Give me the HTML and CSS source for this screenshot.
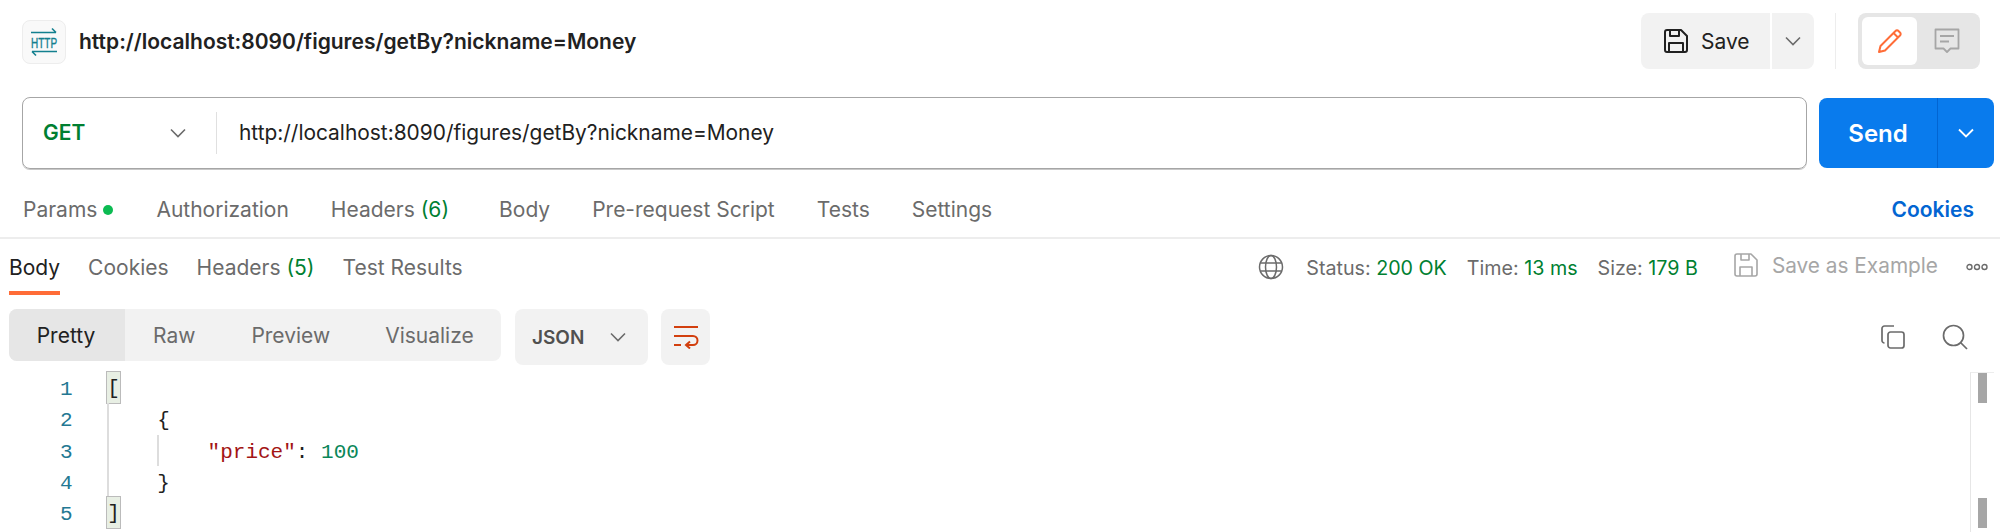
FILE: index.html
```html
<!DOCTYPE html>
<html lang="en">
<head>
<meta charset="utf-8">
<title>Postman request</title>
<link rel="stylesheet" href="styles.css">
</head>
<body>
<header class="title-bar">
  <div class="http-badge">
    <svg width="30" height="30" viewBox="0 0 30 30" fill="none" stroke="#13808f" stroke-width="1.6">
      <path d="M2 5.500H27M23 1.500L27 5.500"/>
      <text x="2" y="13.700" transform="scale(1 1.500)" class="http-text">HTTP</text>
      <path d="M3 24.500H28M7 28.500L3 24.500"/>
    </svg>
  </div>
  <h1 class="request-name">http://localhost:8090/figures/getBy?nickname=Money</h1>
  <div class="title-actions">
    <button class="save-btn">
      <svg width="26" height="26" viewBox="0 0 26 26" fill="none" stroke="#212121" stroke-width="2" stroke-linejoin="round"><path d="M2 4a2 2 0 0 1 2-2h14l6 6v14a2 2 0 0 1-2 2H4a2 2 0 0 1-2-2z"/><path d="M7 2v6h9V2M6 24v-9h14v9"/></svg>
      <span>Save</span>
    </button>
    <button class="save-more">
      <svg class="chev" width="16" height="10" viewBox="0 0 16 10" fill="none" stroke="#6b6b6b" stroke-width="1.6"><path d="M1 1.500l7 7 7-7"/></svg>
    </button>
    <div class="vr"></div>
    <div class="mode-toggle">
      <div class="mode-on">
        <svg width="26" height="26" viewBox="0 0 26 26" fill="none" stroke="#ff6c37" stroke-width="2" stroke-linejoin="round"><path d="M2 24l1.500-6L18.500 3a2 2 0 0 1 3 0l1.500 1.500a2 2 0 0 1 0 3L8 22.500z"/><path d="M16.500 5l4.500 4.500"/></svg>
      </div>
      <div class="mode-off">
        <svg width="26" height="26" viewBox="0 0 26 26" fill="none" stroke="#a6a6a6" stroke-width="1.800" stroke-linejoin="round"><path d="M1.500 1.500h23v19h-8l-3.500 3.500-3.500-3.500h-8z"/><path d="M6 8h14M6 13.500h9"/></svg>
      </div>
    </div>
  </div>
</header>

<section class="url-row">
  <div class="url-box">
    <div class="method"><span>GET</span>
      <svg width="16" height="10" viewBox="0 0 16 10" fill="none" stroke="#6b6b6b" stroke-width="1.600"><path d="M1 1.500l7 7 7-7"/></svg>
    </div>
    <div class="url-text">http://localhost:8090/figures/getBy?nickname=Money</div>
  </div>
  <div class="send">
    <div class="send-main">Send</div>
    <div class="send-more"><svg width="16" height="10" viewBox="0 0 16 10" fill="none" stroke="#fff" stroke-width="1.800"><path d="M1 1.500l7 7 7-7"/></svg></div>
  </div>
</section>

<nav class="req-tabs">
  <span class="t-params">Params<i class="dot"></i></span>
  <span class="t-auth">Authorization</span>
  <span class="t-headers">Headers <em>(6)</em></span>
  <span class="t-body">Body</span>
  <span class="t-pre">Pre-request Script</span>
  <span class="t-tests">Tests</span>
  <span class="t-settings">Settings</span>
  <span class="t-cookies">Cookies</span>
</nav>

<section class="resp-head">
  <div class="resp-tabs">
    <span class="rt rt-active">Body</span>
    <span class="rt">Cookies</span>
    <span class="rt">Headers <em>(5)</em></span>
    <span class="rt">Test Results</span>
  </div>
  <div class="resp-meta">
    <svg class="globe" width="26" height="26" viewBox="0 0 26 26" fill="none" stroke="#6b6b6b" stroke-width="1.500"><circle cx="13" cy="13" r="11.500"/><ellipse cx="13" cy="13" rx="5.500" ry="11.500"/><path d="M2.500 9h21M2.500 17h21"/></svg>
    <span class="m m-status">Status: <b>200 OK</b></span>
    <span class="m m-time">Time: <b>13 ms</b></span>
    <span class="m m-size">Size: <b>179 B</b></span>
    <svg class="save-ex-ico" width="26" height="26" viewBox="0 0 26 26" fill="none" stroke="#a6a6a6" stroke-width="1.600" stroke-linejoin="round"><path d="M2 4a2 2 0 0 1 2-2h14l6 6v14a2 2 0 0 1-2 2H4a2 2 0 0 1-2-2z"/><path d="M8 2v6h8V2M7 24v-9h12v9"/></svg>
    <span class="save-ex">Save as Example</span>
    <svg class="dots" width="22" height="8" viewBox="0 0 22 8" fill="none" stroke="#6b6b6b" stroke-width="1.400"><circle cx="3.500" cy="4" r="2.500"/><circle cx="11" cy="4" r="2.500"/><circle cx="18.500" cy="4" r="2.500"/></svg>
  </div>
</section>

<section class="toolbar">
  <div class="seg">
    <span class="seg-on">Pretty</span>
    <span class="seg-raw">Raw</span>
    <span class="seg-prev">Preview</span>
    <span class="seg-vis">Visualize</span>
  </div>
  <div class="fmt"><span>JSON</span>
    <svg width="16" height="10" viewBox="0 0 16 10" fill="none" stroke="#6b6b6b" stroke-width="1.600"><path d="M1 1.500l7 7 7-7"/></svg>
  </div>
  <div class="wrap-btn">
    <svg width="26" height="24" viewBox="0 0 26 24" fill="none" stroke="#d23f0e" stroke-width="2"><path d="M1 2h24M1 11h19a4 4 0 0 1 0 9h-6M17 16.500l-4 3.500 4 3.500M1 20h7"/></svg>
  </div>
  <div class="tool-icons">
    <svg width="24" height="24" viewBox="0 0 24 24" fill="none" stroke="#6b6b6b" stroke-width="1.700"><path d="M3.500 18A2.500 2.500 0 0 1 1 15.500V3.500A2.500 2.500 0 0 1 3.500 1H13"/><rect x="7" y="7" width="16" height="16" rx="2.500"/></svg>
    <svg width="26" height="26" viewBox="0 0 26 26" fill="none" stroke="#6b6b6b" stroke-width="1.700"><circle cx="11.500" cy="11.500" r="10"/><path d="M18.500 18.500l6.500 6.500"/></svg>
  </div>
</section>

<section class="editor">
  <div class="code">
    <div class="line"><span class="ln">1</span><span class="br">[</span></div>
    <div class="line"><span class="ln">2</span><span class="guide"></span><span>{</span></div>
    <div class="line"><span class="ln">3</span><span class="guide"></span><span class="guide"></span><span class="key">"price"</span><span>: </span><span class="num">100</span></div>
    <div class="line"><span class="ln">4</span><span class="guide"></span><span>}</span></div>
    <div class="line"><span class="ln">5</span><span class="br">]</span></div>
  </div>
  <div class="scroll-track">
    <div class="thumb"></div>
    <div class="thumb"></div>
  </div>
</section>
</body>
</html>
```
FILE: styles.css
```css
* { box-sizing: border-box; }
html, body { margin: 0; height: 532px; overflow: hidden; background: #fff; }
body { font-family: Inter, "Liberation Sans", sans-serif; font-size: 21px; color: #6b6b6b; }
button { font: inherit; border: 0; padding: 0; color: inherit; }
em { font-style: normal; color: #007f31; }

/* title bar */
.title-bar { display: flex; align-items: center; height: 82px; padding: 0 20px 0 22px; }
.http-badge { width: 44px; height: 44px; margin-top: 1px; background: #f9f9f9; border: 1px solid #ededed; border-radius: 8px; display: flex; align-items: center; justify-content: center; }
.http-text { font-family: "Liberation Sans", sans-serif; font-size: 10px; fill: #13808f; stroke: #13808f; stroke-width: 0.25; }
.request-name { margin: 0 0 0 13px; font-size: 21px; font-weight: 600; color: #212121; }
.title-actions { margin-left: auto; display: flex; align-items: center; height: 56px; }
.save-btn { width: 129px; height: 56px; background: #f2f2f2; border-radius: 8px 0 0 8px; display: flex; align-items: center; gap: 12px; padding-left: 22px; color: #212121; }
.save-more { width: 42px; height: 56px; margin-left: 2px; background: #f2f2f2; border-radius: 0 8px 8px 0; display: flex; align-items: center; justify-content: center; }
.vr { width: 1px; height: 56px; background: #ededed; margin: 0 22px 0 21px; }
.mode-toggle { width: 122px; height: 56px; background: #e6e6e6; border-radius: 8px; padding: 4px; display: flex; align-items: center; }
.mode-on { width: 55px; height: 48px; background: #fff; border-radius: 6px; display: flex; align-items: center; justify-content: center; }
.mode-off { flex: 1; display: flex; align-items: center; justify-content: center; }

/* url row */
.url-row { display: flex; align-items: center; height: 74px; margin-top: 14px; padding: 0 6px 0 22px; }
.url-box { width: 1785px; height: 72px; border: 1px solid #a6a6a6; border-radius: 8px; box-shadow: 0 1px 0 #c8c8c8; display: flex; align-items: center; }
.method { width: 194px; height: 42px; border-right: 1px solid #e0e0e0; display: flex; align-items: center; justify-content: space-between; padding: 0 30px 0 20px; font-weight: 600; color: #007f31; }
.method span { padding-bottom: 2px; }
.url-text { padding: 0 0 2px 22px; color: #212121; font-size: 20.900px; }
.send { margin-left: 12px; width: 175px; height: 70px; background: #097bed; border-radius: 8px; display: flex; color: #fff; }
.send-main { width: 118px; display: flex; align-items: center; justify-content: center; font-size: 24px; font-weight: 600; }
.send-more { flex: 1; border-left: 1px solid #0265d2; display: flex; align-items: center; justify-content: center; }

/* request tabs */
.req-tabs { display: flex; align-items: center; height: 67px; margin-top: 2px; padding: 9px 26px 0 23px; border-bottom: 2px solid #ededed; }
.req-tabs > span { white-space: nowrap; }
.dot { display: inline-block; width: 10px; height: 10px; margin-left: 6px; background: #0cbb52; border-radius: 50%; vertical-align: 2px; }
.t-auth { margin-left: 43px; }
.t-headers { margin-left: 42px; }
.t-body { margin-left: 50px; }
.t-pre { margin-left: 42px; }
.t-tests { margin-left: 42px; }
.t-settings { margin-left: 42px; }
.t-cookies { margin-left: auto; color: #0265d2; font-weight: 600; }

/* response header */
.resp-head { display: flex; align-items: flex-start; height: 57px; padding: 0 12px 0 9px; }
.resp-tabs { display: flex; gap: 28px; }
.rt { height: 56px; padding-top: 15px; line-height: 28px; white-space: nowrap; }
.rt-active { color: #212121; border-bottom: 4px solid #ff6c37; }
.resp-meta { margin-left: auto; display: flex; align-items: center; height: 56px; white-space: nowrap; }
.m { font-size: 19.700px; margin-top: 2px; }
.m b { font-weight: 400; color: #007f31; }
.m-status { margin-left: 22px; }
.m-time { margin-left: 20px; }
.m-size { margin-left: 20px; }
.save-ex-ico { margin-left: 35px; margin-top: -4px; }
.save-ex { margin-left: 13px; color: #a6a6a6; margin-top: -4px; font-size: 20.800px; }
.dots { margin-left: 28px; }

/* toolbar */
.toolbar { display: flex; align-items: flex-start; height: 63px; margin-top: 13px; padding: 0 32px 0 9px; }
.seg { display: flex; width: 492px; height: 52px; background: #f2f2f2; border-radius: 8px; overflow: hidden; align-items: center; }
.seg-on { width: 116px; height: 52px; background: #e6e6e6; color: #212121; display: flex; align-items: center; justify-content: center; padding-right: 2px; }
.seg-raw { margin-left: 28px; }
.seg-prev { margin-left: 56px; }
.seg-vis { margin-left: 55px; }
.fmt { width: 133px; height: 56px; margin-left: 14px; background: #f2f2f2; border-radius: 8px; display: flex; align-items: center; justify-content: space-between; padding: 0 22px 0 17px; font-weight: 600; font-size: 19px; color: #505050; }
.wrap-btn { width: 49px; height: 56px; margin-left: 13px; background: #f2f2f2; border-radius: 8px; display: flex; align-items: center; justify-content: center; }
.tool-icons { margin-left: auto; display: flex; align-items: center; gap: 37px; height: 56px; }

/* editor */
.editor { display: flex; height: 160px; padding-right: 6px; }
.code { flex: 1; font-family: "Liberation Mono", monospace; font-size: 21px; line-height: 35px; color: #212121; }
.line { display: flex; height: 31.250px; white-space: pre; }
.ln { width: 73px; padding-left: 60px; margin-right: 34px; color: #237893; }
.br { width: 13px; height: 31px; background: #e8efe4; outline: 1px solid #bbb; text-align: center; line-height: 33px; overflow: hidden; }
.guide { width: 50.300px; height: 31.250px; border-left: 2px solid #dddddd; }
.key { color: #a31515; }
.num { color: #098658; }
.scroll-track { width: 24px; height: 160px; border-left: 1px solid #e6e6e6; border-top: 1px solid #ededed; padding-left: 7px; display: flex; flex-direction: column; justify-content: space-between; padding-bottom: 4px; }
.thumb { width: 9px; height: 30px; background: #a6a6a6; }
```
